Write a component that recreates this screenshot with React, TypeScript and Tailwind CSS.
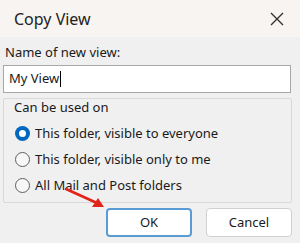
import React from "react";

function Radio({ checked }: { checked?: boolean }) {
  return checked ? (
    <span className="w-[15px] h-[15px] rounded-full bg-[#0067c0] flex items-center justify-center shrink-0">
      <span className="w-[7px] h-[7px] rounded-full bg-white"></span>
    </span>
  ) : (
    <span className="w-[15px] h-[15px] rounded-full border border-[#5f5f5f] bg-[#f7f7f7] shrink-0"></span>
  );
}

export default function App() {
  const options = [
    "This folder, visible to everyone",
    "This folder, visible only to me",
    "All Mail and Post folders",
  ];

  return (
    <div className="w-[300px] h-[243px] bg-[#f0f0f0] text-[#1a1a1a] font-['Noto_Sans',sans-serif] overflow-hidden relative">
      {/* title bar */}
      <div className="h-[37px] bg-[#f8f4f1] flex items-center justify-between pl-[14px] pr-[16px]">
        <span className="text-[16px] text-[#222]">Copy View</span>
        <svg width="14" height="14" viewBox="0 0 14 14" className="text-[#333]">
          <path d="M1 1 L13 13 M13 1 L1 13" stroke="currentColor" strokeWidth="1.4" />
        </svg>
      </div>

      <div className="px-[3px] pt-[6px]">
        <div className="pl-[2px] text-[13px] leading-[18px]">Name of new view:</div>
        <div className="mt-[4px] mr-[6px] h-[28px] bg-white border border-[#a8a8a8] flex items-center pl-[5px] text-[13px]">
          My View<span className="w-px h-[16px] bg-black ml-px"></span>
        </div>

        {/* group box */}
        <div className="mt-[5px] mr-[5px] h-[105px] border border-[#d9d9d9] rounded-[2px] pl-[10px]">
          <div className="text-[13px] leading-[18px] -mt-[1px]">Can be used on</div>
          <div className="flex flex-col gap-[8px] mt-[8px] pl-[1px]">
            {options.map((o, i) => (
              <div key={o} className="flex items-center gap-[5px] text-[13px] leading-[18px]">
                <Radio checked={i === 0} />
                <span>{o}</span>
              </div>
            ))}
          </div>
        </div>

        {/* buttons */}
        <div className="flex justify-end gap-[14px] mt-[5px] mr-[5px]">
          <button className="w-[86px] h-[29px] rounded-[4px] bg-white border-2 border-[#5b9bd5] text-[13px]">
            OK
          </button>
          <button className="w-[86px] h-[29px] rounded-[4px] bg-white border border-[#d0d0d0] text-[13px]">
            Cancel
          </button>
        </div>
      </div>

      {/* red arrow annotation */}
      <svg className="absolute left-[64px] top-[186px]" width="42" height="24" viewBox="0 0 42 24">
        <path d="M2 3 L33 17" stroke="#e2231a" strokeWidth="2.6" strokeLinecap="round" />
        <path d="M40 21 L28 21 L34 12 Z" fill="#e2231a" />
      </svg>
    </div>
  );
}
